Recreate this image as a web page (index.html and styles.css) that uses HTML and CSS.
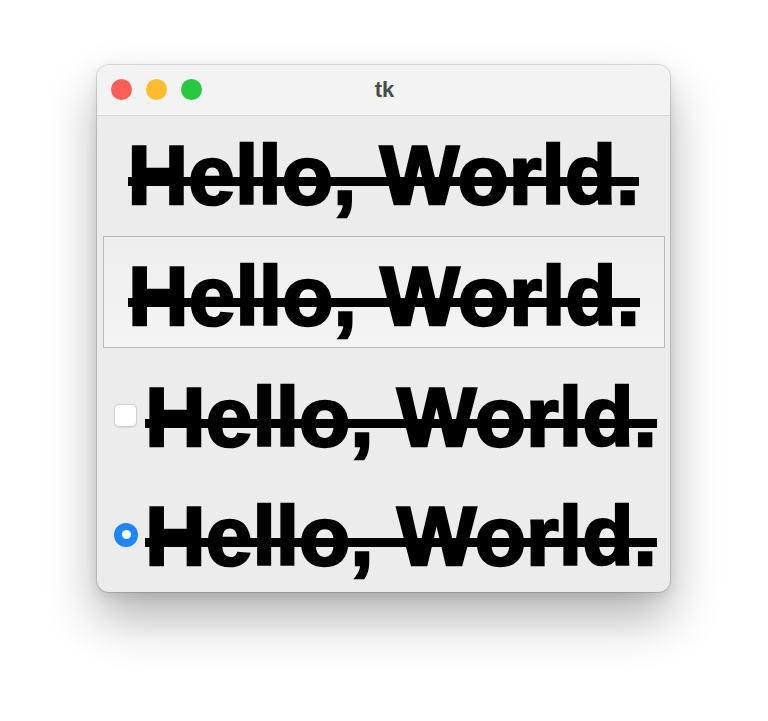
FILE: index.html
```html
<!DOCTYPE html>
<html>
<head>
<meta charset="utf-8">
<link rel="stylesheet" href="styles.css">
</head>
<body>
<div class="window">
  <div class="titlebar">
    <div class="lights">
      <span class="light red"></span>
      <span class="light yellow"></span>
      <span class="light green"></span>
    </div>
    <div class="title">tk</div>
  </div>
  <div class="content">
    <div class="label"><span class="txt">Hello, World.</span></div>
    <div class="button"><span class="txt">Hello, World.</span></div>
    <div class="choice">
      <span class="checkbox"></span>
      <span class="txt">Hello, World.</span>
    </div>
    <div class="choice">
      <span class="radio"></span>
      <span class="txt">Hello, World.</span>
    </div>
  </div>
</div>
</body>
</html>
```
FILE: styles.css
```css
html {
  margin: 0;
  padding: 0;
  background: #ffffff;
  min-height: 100%;
}
body {
  margin: 0;
  box-sizing: border-box;
  min-height: 721px;
  padding: 65px 0 0 97px;
  background: #ffffff;
  font-family: "Liberation Sans", Arial, sans-serif;
}
.window {
  width: 573px;
  height: 527px;
  border-radius: 12px;
  background: #ececec;
  overflow: hidden;
  box-shadow: 0 0 0 1px rgba(0,0,0,0.12), 0 26px 50px rgba(0,0,0,0.30), 0 4px 12px rgba(0,0,0,0.10);
  display: flex;
  flex-direction: column;
}
.titlebar {
  height: 50px;
  flex: none;
  background: #f3f3f3;
  border-bottom: 1px solid #d7d7d7;
  position: relative;
  display: flex;
  align-items: center;
  justify-content: center;
}
.lights {
  position: absolute;
  left: 14px;
  top: 14px;
  display: flex;
  gap: 14px;
}
.light {
  width: 21px;
  height: 21px;
  border-radius: 50%;
  display: block;
}
.red { background: #fe5f57; }
.yellow { background: #febc2e; }
.green { background: #28c840; }
.title {
  font-family: "Liberation Sans", Arial, sans-serif;
  font-weight: bold;
  font-size: 22px;
  color: #4a4a4a;
  margin-left: 2px;
}
.content {
  flex: 1;
  display: flex;
  flex-direction: column;
  padding-top: 9px;
}
.txt {
  display: inline-block;
  font-family: "Liberation Sans", Arial, sans-serif;
  font-weight: bold;
  font-size: 84px;
  line-height: 100px;
  height: 100px;
  letter-spacing: 0;
  color: #000;
  -webkit-text-stroke: 2.5px #000;
  white-space: nowrap;
  background-image: linear-gradient(#000, #000);
  background-repeat: no-repeat;
  background-size: 100% 9px;
  background-position: 0 52px;
}
.label {
  height: 100px;
  display: flex;
  justify-content: center;
}
.button {
  margin: 11px 5px 0 6px;
  height: 100px;
  padding: 9px 0 1px;
  border: 1px solid #b9b9b9;
  background: linear-gradient(#eeeeee, #f4f4f4);
  display: flex;
  justify-content: center;
}
.choice {
  height: 100px;
  margin-top: 19px;
  display: flex;
  align-items: center;
  padding-left: 17px;
}
.checkbox {
  width: 21px;
  height: 21px;
  border-radius: 5px;
  background: #ffffff;
  border: 1px solid #d2d2d2;
  box-shadow: 0 0.5px 1px rgba(0,0,0,0.08);
  margin-right: 8px;
  margin-top: -3px;
  flex: none;
}
.radio {
  width: 24px;
  height: 24px;
  border-radius: 50%;
  background: #1e86fa;
  margin-right: 7px;
  margin-top: -3px;
  flex: none;
  display: flex;
  align-items: center;
  justify-content: center;
}
.radio::after {
  content: "";
  width: 9px;
  height: 9px;
  border-radius: 50%;
  background: #ffffff;
}
```
